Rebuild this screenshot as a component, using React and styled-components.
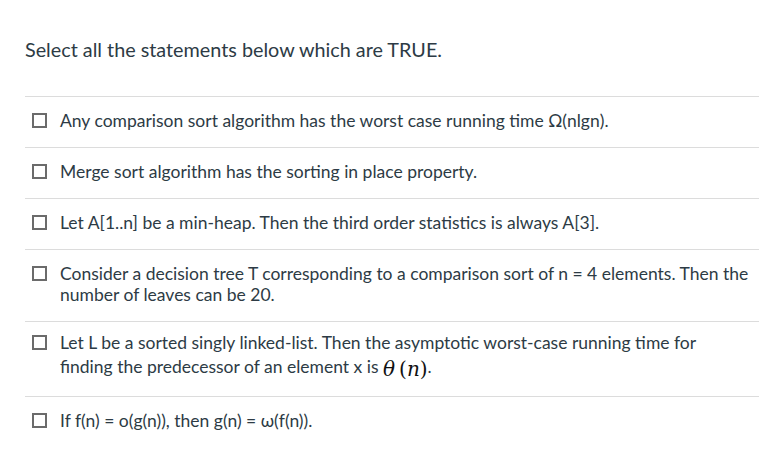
import React from "react";
import styled, { createGlobalStyle } from "styled-components";

const Global = createGlobalStyle`
  html, body { margin: 0; padding: 0; background: #ffffff; }
  body { font-family: Lato, "Noto Sans", sans-serif; color: #2d3b45; }
`;

const Page = styled.div`
  padding: 36px 19px 0 25px;
`;

const Title = styled.div`
  font-size: 19.8px;
  line-height: 27px;
  margin-bottom: 33px;
`;

const List = styled.div`
  display: flex;
  flex-direction: column;
`;

const Row = styled.label`
  display: flex;
  align-items: flex-start;
  border-top: 1px solid #dcdcdc;
  padding: ${(p) => p.$padTop ?? 13}px 8px 16px 7px;
  font-size: 17.5px;
  line-height: 21px;
`;

const Box = styled.span`
  flex: none;
  width: 11px;
  height: 11px;
  border: 2px solid #6b6b6b;
  margin-top: 3px;
  margin-right: 13px;
`;

const Text = styled.span`
  flex: 1;
`;

const Math = styled.span`
  display: inline-block;
  font-family: "DejaVu Serif", "Liberation Serif", serif;
  font-size: 20px;
  line-height: 22px;
  vertical-align: -3px;
  margin-top: 5px;
  color: #111;
`;

const I = styled.i`
  font-style: italic;
`;

const items = [
  { t: "Any comparison sort algorithm has the worst case running time Ω(nlgn)." },
  { t: "Merge sort algorithm has the sorting in place property." },
  { t: "Let A[1..n] be a min-heap. Then the third order statistics is always A[3]." },
  {
    t: "Consider a decision tree T corresponding to a comparison sort of n = 4 elements. Then the number of leaves can be 20.",
  },
  {
    padTop: 10,
    t: (
      <>
        Let L be a sorted singly linked-list. Then the asymptotic worst-case running time for finding the
        predecessor of an element x is{" "}
        <Math>
          <I>θ</I>&thinsp;(<I>n</I>)
        </Math>
        .
      </>
    ),
  },
  { t: "If f(n) = o(g(n)), then g(n) = ω(f(n))." },
];

export default function App() {
  return (
    <Page>
      <Global />
      <Title>Select all the statements below which are TRUE.</Title>
      <List>
        {items.map((it, i) => (
          <Row key={i} $padTop={it.padTop}>
            <Box />
            <Text>{it.t}</Text>
          </Row>
        ))}
      </List>
    </Page>
  );
}
